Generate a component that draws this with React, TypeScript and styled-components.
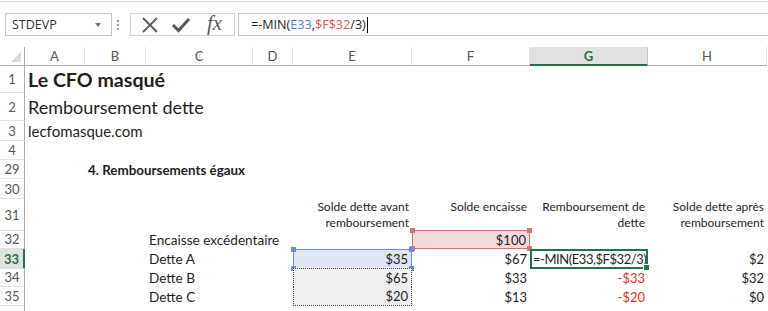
import React from 'react';
import styled, { createGlobalStyle, css } from 'styled-components';

const GlobalStyle = createGlobalStyle`
  html, body {
    margin: 0;
    padding: 0;
    background: #ffffff;
  }
  body {
    font-family: Lato, "Liberation Sans", sans-serif;
    overflow: hidden;
  }
`;

const COLS = '25px 60px 61px 107px 40px 119px 118px 118px 119px';
const LETTERS = ['A', 'B', 'C', 'D', 'E', 'F', 'G', 'H'];
const GREEN = '#217346';

/* Formula bar */
const TopBar = styled.div`
    height: 46px;
    margin-top: 1px;
    border-top: 1px solid #d9d9d9;
    box-sizing: border-box;
    padding: 11px 0 0 5px;
    display: flex;
    align-items: flex-start;
`;

const NameBox = styled.div`
    width: 107px;
    height: 23px;
    box-sizing: border-box;
    border: 1px solid #c8c8c8;
    display: flex;
    align-items: center;
    justify-content: space-between;
    padding: 0 10px 0 6px;
    font-family: "Open Sans", sans-serif;
    font-size: 12.5px;
    color: #333;
`;

const DropArrow = styled.span`
    width: 0;
    height: 0;
    border-left: 3.5px solid transparent;
    border-right: 3.5px solid transparent;
    border-top: 4px solid #777;
`;

const Grip = styled.div`
    width: 18px;
    height: 23px;
    display: flex;
    flex-direction: column;
    justify-content: center;
    align-items: center;
    gap: 2px;
    padding-right: 6px;
    box-sizing: border-box;
`;

const GripDot = styled.span`
    width: 2px;
    height: 2px;
    background: #9a9a9a;
`;

const IconBox = styled.div`
    width: 105px;
    height: 23px;
    box-sizing: border-box;
    border: 1px solid #d4d4d4;
    display: flex;
    align-items: center;
    padding-left: 10px;
    gap: 12px;
    color: #595959;
`;

const Fx = styled.span`
    font-family: "Liberation Serif", serif;
    font-style: italic;
    font-size: 21px;
    line-height: 1;
    color: #595959;
    margin-left: 4px;
    margin-top: -3px;
`;

const FormulaBox = styled.div`
    flex: 1;
    height: 23px;
    margin-left: 3px;
    box-sizing: border-box;
    border: 1px solid #c8c8c8;
    border-right: none;
    display: flex;
    align-items: center;
    padding-left: 12px;
    font-family: "Open Sans", sans-serif;
    font-size: 12.6px;
    color: #222;
`;

const Ref = styled.span<{ $c: string }>`
    color: ${({ $c }) => $c};
`;

const Caret = styled.span`
    width: 1px;
    height: 16px;
    background: #000;
    margin-left: 1px;
`;

/* Grid */
const Sheet = styled.div`
    display: flex;
    flex-direction: column;
`;

const Row = styled.div<{ $h: number }>`
    display: grid;
    grid-template-columns: ${COLS};
    height: ${({ $h }) => $h}px;
`;

const Corner = styled.div`
    position: relative;
    border-right: 1px solid #ababab;
    border-bottom: 1px solid #ababab;
    box-sizing: border-box;
    &::after {
        content: '';
        position: absolute;
        right: 3px;
        bottom: 3px;
        border-left: 10px solid transparent;
        border-bottom: 10px solid #dadada;
    }
`;

const ColHead = styled.div<{ $sel?: boolean }>`
    box-sizing: border-box;
    display: flex;
    align-items: center;
    justify-content: center;
    font-size: 13px;
    color: #555;
    border-right: 1px solid #e1e1e1;
    border-bottom: 1px solid #ababab;
    ${({ $sel }) =>
        $sel &&
        css`
            background: #e1e1e1;
            color: ${GREEN};
            font-weight: 700;
            border-bottom: 2px solid ${GREEN};
            border-right-color: #c6c6c6;
        `}
`;

const RowHead = styled.div<{ $sel?: boolean }>`
    box-sizing: border-box;
    display: flex;
    align-items: center;
    justify-content: center;
    font-size: 13px;
    color: #555;
    border-right: 1px solid #ababab;
    border-bottom: 1px solid #e1e1e1;
    ${({ $sel }) =>
        $sel &&
        css`
            background: #e1e1e1;
            color: ${GREEN};
            font-weight: 700;
            border-right: 2px solid ${GREEN};
        `}
`;

type Mark = 'red' | 'blue' | 'antsTop' | 'antsBottom' | 'active';

const markStyles: Record<Mark, ReturnType<typeof css>> = {
    red: css`
        background: #f2dcdb;
        border: 1.5px solid #d86f78;
    `,
    blue: css`
        background: #dfe5f2;
        border: 1.5px solid #6d8fd2;
    `,
    antsTop: css`
        background: #efefef;
        border: 1px dotted #444;
        border-bottom: none;
    `,
    antsBottom: css`
        background: #efefef;
        border: 1px dotted #444;
        border-top: none;
    `,
    active: css`
        background: #fff;
        border: 2px solid ${GREEN};
        padding-left: 1px;
        letter-spacing: -0.45px;
    `,
};

const Cell = styled.div<{
    $align?: 'left' | 'right';
    $top?: boolean;
    $size?: number;
    $bold?: boolean;
    $color?: string;
    $mark?: Mark;
}>`
    position: relative;
    box-sizing: border-box;
    display: flex;
    flex-direction: column;
    justify-content: ${({ $top }) => ($top ? 'flex-start' : 'center')};
    align-items: ${({ $align }) => ($align === 'right' ? 'flex-end' : 'flex-start')};
    text-align: ${({ $align }) => $align ?? 'left'};
    padding: 0 3px 0 3px;
    font-size: ${({ $size }) => $size ?? 13.6}px;
    font-weight: ${({ $bold }) => ($bold ? 700 : 400)};
    color: ${({ $color }) => $color ?? '#1e1e1e'};
    line-height: 16px;
    white-space: pre;
    z-index: ${({ $mark }) => ($mark ? 1 : 0)};
    ${({ $mark }) => $mark && markStyles[$mark]}
`;

const Handle = styled.span<{ $c: string; $pos: 'tl' | 'tr' | 'bl' | 'br' }>`
    position: absolute;
    width: 5px;
    height: 5px;
    background: ${({ $c }) => $c};
    ${({ $pos }) => ($pos[0] === 't' ? 'top: -3px;' : 'bottom: -3px;')}
    ${({ $pos }) => ($pos[1] === 'l' ? 'left: -3px;' : 'right: -3px;')}
`;

const FillHandle = styled.span`
    position: absolute;
    width: 5px;
    height: 5px;
    right: -4px;
    bottom: -4px;
    background: ${GREEN};
    border: 1px solid #fff;
`;

type CellData = {
    t: string;
    align?: 'left' | 'right';
    top?: boolean;
    size?: number;
    bold?: boolean;
    color?: string;
    mark?: Mark;
};

type RowData = { n: string; h: number; cells: Partial<Record<string, CellData>> };

const RED = '#e0322a';
const HEAD = 12;

const rows: RowData[] = [
    { n: '1', h: 27, cells: { A: { t: 'Le CFO masqué', bold: true, size: 19.6 } } },
    { n: '2', h: 28, cells: { A: { t: 'Remboursement dette', size: 18 } } },
    { n: '3', h: 20, cells: { A: { t: 'lecfomasque.com', size: 15 } } },
    { n: '4', h: 19, cells: {} },
    { n: '29', h: 19, cells: { B: { t: '4. Remboursements égaux', bold: true, size: 13.4 } } },
    { n: '30', h: 20, cells: {} },
    {
        n: '31',
        h: 31,
        cells: {
            E: { t: 'Solde dette avant\nremboursement', align: 'right', top: true, size: HEAD },
            F: { t: 'Solde encaisse', align: 'right', top: true, size: HEAD },
            G: { t: 'Remboursement de\ndette', align: 'right', top: true, size: HEAD },
            H: { t: 'Solde dette après\nremboursement', align: 'right', top: true, size: HEAD },
        },
    },
    {
        n: '32',
        h: 19,
        cells: {
            C: { t: 'Encaisse excédentaire' },
            F: { t: '$100', align: 'right', mark: 'red', size: 13 },
        },
    },
    {
        n: '33',
        h: 19,
        cells: {
            C: { t: 'Dette A' },
            E: { t: '$35', align: 'right', mark: 'blue', size: 13 },
            F: { t: '$67', align: 'right', size: 13 },
            G: { t: '=-MIN(E33,$F$32/3)', mark: 'active', size: 13 },
            H: { t: '$2', align: 'right', size: 13 },
        },
    },
    {
        n: '34',
        h: 19,
        cells: {
            C: { t: 'Dette B' },
            E: { t: '$65', align: 'right', mark: 'antsTop', size: 13 },
            F: { t: '$33', align: 'right', size: 13 },
            G: { t: '-$33', align: 'right', color: RED, size: 13 },
            H: { t: '$32', align: 'right', size: 13 },
        },
    },
    {
        n: '35',
        h: 19,
        cells: {
            C: { t: 'Dette C' },
            E: { t: '$20', align: 'right', mark: 'antsBottom', size: 13 },
            F: { t: '$13', align: 'right', size: 13 },
            G: { t: '-$20', align: 'right', color: RED, size: 13 },
            H: { t: '$0', align: 'right', size: 13 },
        },
    },
    { n: '', h: 19, cells: {} },
];

const handleColor: Partial<Record<Mark, string>> = { red: '#d86f78', blue: '#6d8fd2' };

function CellView({ d }: { d?: CellData }) {
    if (!d) return <Cell />;
    const hc = d.mark ? handleColor[d.mark] : undefined;
    return (
        <Cell $align={d.align} $top={d.top} $size={d.size} $bold={d.bold} $color={d.color} $mark={d.mark}>
            {d.t}
            {hc &&
                (['tl', 'tr', 'bl', 'br'] as const).map((p) => <Handle key={p} $c={hc} $pos={p} />)}
            {d.mark === 'active' && <FillHandle />}
        </Cell>
    );
}

const XIcon = () => (
    <svg width="18" height="18" viewBox="0 0 18 18">
        <path d="M2 2 L16 16 M16 2 L2 16" stroke="#595959" strokeWidth="1.8" fill="none" />
    </svg>
);

const CheckIcon = () => (
    <svg width="20" height="18" viewBox="0 0 20 18">
        <path d="M2 9 L7.5 14.5 L18 3" stroke="#595959" strokeWidth="3" fill="none" />
    </svg>
);

export default function App() {
    return (
        <>
            <GlobalStyle />
            <TopBar>
                <NameBox>
                    STDEVP
                    <DropArrow />
                </NameBox>
                <Grip>
                    <GripDot />
                    <GripDot />
                    <GripDot />
                </Grip>
                <IconBox>
                    <XIcon />
                    <CheckIcon />
                    <Fx>fx</Fx>
                </IconBox>
                <FormulaBox>
                    =-MIN(<Ref $c="#4f7fc8">E33</Ref>,<Ref $c="#d4555f">$F$32</Ref>/3)
                    <Caret />
                </FormulaBox>
            </TopBar>
            <Sheet>
                <Row $h={19}>
                    <Corner />
                    {LETTERS.map((l) => (
                        <ColHead key={l} $sel={l === 'G'}>
                            {l}
                        </ColHead>
                    ))}
                </Row>
                {rows.map((r, i) => (
                    <Row key={i} $h={r.h}>
                        <RowHead $sel={r.n === '33'}>{r.n}</RowHead>
                        {LETTERS.map((l) => (
                            <CellView key={l} d={r.cells[l]} />
                        ))}
                    </Row>
                ))}
            </Sheet>
        </>
    );
}
